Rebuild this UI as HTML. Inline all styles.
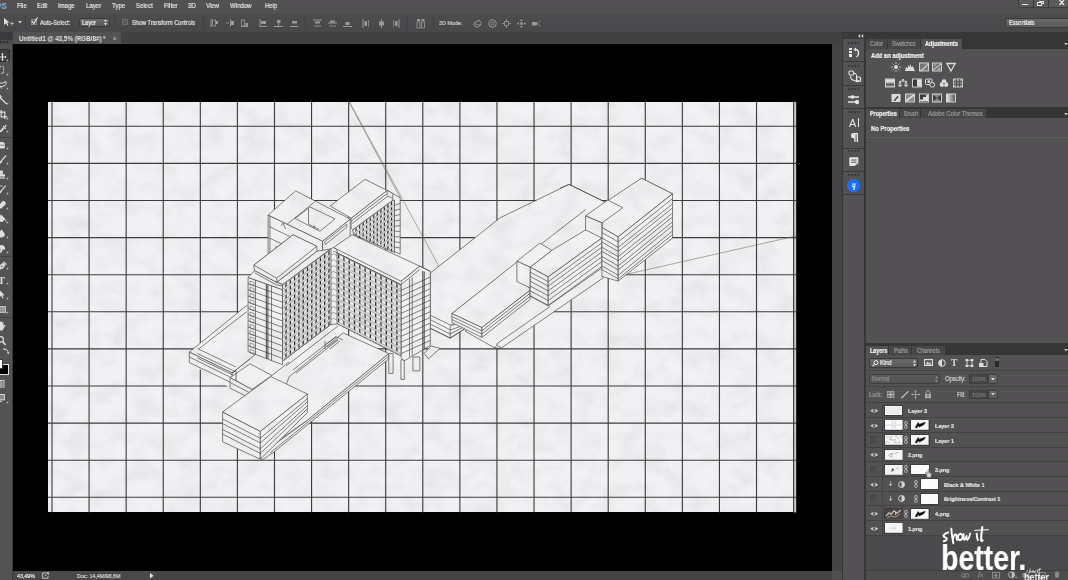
<!DOCTYPE html>
<html><head><meta charset="utf-8">
<style>
*{margin:0;padding:0;box-sizing:border-box}
html,body{width:1068px;height:580px;overflow:hidden;background:#535154;font-family:"Liberation Sans",sans-serif;color:#e0e0e0}
.abs{position:absolute}
#root{position:relative;width:1068px;height:580px;overflow:hidden;background:#535154;filter:blur(.45px)}
.t{position:absolute;white-space:nowrap;font-size:7px;line-height:8px;height:8px;color:#e4e4e4;transform:scaleX(.86);transform-origin:0 50%;will-change:transform;-webkit-text-stroke:.2px currentColor}
.b{font-weight:bold;color:#f2f2f2}
.dim{color:#8f8f8f}
svg{position:absolute;overflow:visible}
#menubar{left:0;top:0;width:1068px;height:12px;background:#525052}
#optbar{left:0;top:12px;width:1068px;height:20px;background:linear-gradient(#4d4c4e,#484749);border-top:1px solid #565556}
#tabbar{left:0;top:32px;width:843px;height:12px;background:#424142}
#doctab{left:13px;top:32px;width:108px;height:12px;background:#535154}
#canvas{left:12.4px;top:44px;width:819.6px;height:527px;background:#000}
#doc{left:48px;top:102px;width:748.2px;height:410.4px;background:#f1f1f3}
#status{left:13px;top:571px;width:819px;height:9px;background:#4a494a}
#toolbar{left:0;top:32px;width:12.6px;height:548px;background:#545354}
#vscroll{left:831.8px;top:44px;width:10.2px;height:536px;background:#444345}
#rightbg{left:841.8px;top:32px;width:226px;height:548px;background:#383738}
#iconcol{left:842.9px;top:39px;width:21.3px;height:541px;background:#535154}
.panel{background:#535154}
.tabrow{background:#373637}
.tab{position:absolute;top:0;height:100%;background:#484748;border-right:1px solid #373637}
.tab.on{background:#535154}
.tab .t{top:1px}
</style></head><body><div id="root">
<div id="menubar" class="abs"></div>
<div id="optbar" class="abs"></div>
<div id="tabbar" class="abs"></div>
<div id="doctab" class="abs"></div>
<div id="canvas" class="abs"></div>
<div id="doc" class="abs"></div>
<div id="status" class="abs"></div>
<div id="toolbar" class="abs"></div>
<div id="vscroll" class="abs"></div>
<div id="rightbg" class="abs"></div>
<div id="iconcol" class="abs"></div>
<!-- menu -->
<div class="t b" style="left:-4.5px;top:0.5px;font-size:9.5px;line-height:10px;height:10px;color:#7fa6c9">PS</div>
<div class="t" style="left:17px;top:1.5px">File</div>
<div class="t" style="left:36.5px;top:1.5px">Edit</div>
<div class="t" style="left:57.5px;top:1.5px">Image</div>
<div class="t" style="left:85.5px;top:1.5px">Layer</div>
<div class="t" style="left:111.5px;top:1.5px">Type</div>
<div class="t" style="left:135.5px;top:1.5px">Select</div>
<div class="t" style="left:163.5px;top:1.5px">Filter</div>
<div class="t" style="left:188px;top:1.5px">3D</div>
<div class="t" style="left:206px;top:1.5px">View</div>
<div class="t" style="left:230px;top:1.5px">Window</div>
<div class="t" style="left:264.5px;top:1.5px">Help</div>
<!-- window controls -->
<div class="abs" style="left:1018px;top:-3px;width:53px;height:11px;background:#5b5a5c;border:1px solid #3e3d3f;border-radius:3px"></div>
<div class="abs" style="left:1033px;top:0;width:1px;height:8px;background:#3a393a"></div>
<div class="abs" style="left:1048px;top:0;width:1px;height:8px;background:#3a393a"></div>
<div class="abs" style="left:1022px;top:3.5px;width:6px;height:1.5px;background:#e8e8e8"></div>
<div class="abs" style="left:1039px;top:0.5px;width:4.5px;height:3.5px;border:1px solid #e0e0e0"></div>
<div class="abs" style="left:1037px;top:2px;width:4.5px;height:3.5px;border:1px solid #e0e0e0;background:#5b5a5c"></div>
<svg style="left:1059px;top:0" width="6" height="6"><path d="M0.5 0L5 5M5 0L0.5 5" stroke="#eee" stroke-width="1.2"/></svg>
<!-- options bar -->
<svg style="left:3px;top:18px" width="16" height="9"><path d="M1 0L1 7L3 5.2L4.5 8L5.5 7.5L4.2 4.8L6.5 4.5Z" fill="#ddd"/><path d="M9 3.5v4M7 5.5h4" stroke="#bbb" stroke-width=".8"/></svg>
<svg style="left:18px;top:21px" width="5" height="3"><path d="M0 0H4L2 2.5Z" fill="#ccc"/></svg>
<div class="abs" style="left:25px;top:15px;width:1px;height:14px;background:#424142"></div>
<div class="abs" style="left:30.5px;top:19px;width:6px;height:6px;border:1px solid #8a898a;background:#5a595a"></div>
<svg style="left:31px;top:17px" width="8" height="8"><path d="M1 4L2.8 6.5L6.5 .5" stroke="#eee" stroke-width="1.1" fill="none"/></svg>
<div class="t" style="left:40px;top:18.8px;font-size:6.5px">Auto-Select:</div>
<div class="abs" style="left:78.5px;top:18px;width:31px;height:9px;background:linear-gradient(#6a696a,#5a595a);border:1px solid #3c3b3c;border-radius:2px"></div>
<div class="t" style="left:81.5px;top:18.8px;font-size:6.5px;color:#eee">Layer</div>
<svg style="left:104px;top:19px" width="4" height="7"><path d="M0 2.5L1.5 0L3 2.5ZM0 4L1.5 6.5L3 4Z" fill="#ddd"/></svg>
<div class="abs" style="left:114px;top:15px;width:1px;height:14px;background:#424142"></div>
<div class="abs" style="left:121.5px;top:19px;width:6px;height:6px;border:1px solid #6e6d6e;background:#5a595a"></div>
<div class="t" style="left:131.5px;top:18.8px;font-size:6.5px">Show Transform Controls</div>
<div class="abs" style="left:203px;top:15px;width:1px;height:14px;background:#424142"></div>
<div class="abs" style="left:305px;top:15px;width:1px;height:14px;background:#424142"></div>
<div class="abs" style="left:407px;top:15px;width:1px;height:14px;background:#424142"></div>
<div class="abs" style="left:433px;top:15px;width:1px;height:14px;background:#424142"></div>
<div class="t dim" style="left:438.5px;top:19px;font-size:6.2px;color:#cfcfcf">3D Mode:</div>
<!-- essentials -->
<div class="abs" style="left:1005px;top:18px;width:66px;height:9.5px;background:linear-gradient(#6a696a,#5b5a5b);border:1px solid #3c3b3c;border-radius:2px"></div>
<div class="t" style="left:1009px;top:19px;font-size:6.5px;color:#eee">Essentials</div>
<!-- doc tab -->
<div class="t b" style="left:18.5px;top:34.8px;font-size:6.5px;color:#e8e8e8;transform:scaleX(.96);-webkit-text-stroke:0">Untitled1 @ 43,5% (RGB/8#) *</div>
<div class="t" style="left:113px;top:34.8px;font-size:6.5px;color:#bbb">×</div>
<!-- optbar icons -->
<svg style="left:210.1px;top:18.5px" width="9" height="9"><path d="M1 0v8" stroke="#9a999a" stroke-width="1"/><rect x="2.5" y="1" width="3" height="6" fill="none" stroke="#9a999a" stroke-width=".8"/><rect x="6" y="2" width="2" height="3" fill="#9a999a"/></svg>
<svg style="left:225.5px;top:18.5px" width="9" height="9"><path d="M4.5 0v8M0 4h3" stroke="#9a999a" stroke-width=".9"/><rect x="5" y="2" width="3" height="4" fill="#9a999a"/></svg>
<svg style="left:240.1px;top:18.5px" width="9" height="9"><path d="M1 7.5h7" stroke="#9a999a" stroke-width="1"/><rect x="1.5" y="1" width="3" height="6" fill="none" stroke="#9a999a" stroke-width=".8"/><rect x="5.5" y="4" width="2.5" height="3" fill="#9a999a"/></svg>
<svg style="left:258.8px;top:18.5px" width="9" height="9"><path d="M1 0v8M1 7.5h7" stroke="#9a999a" stroke-width="1"/><rect x="2" y="2" width="5" height="3" fill="#9a999a"/></svg>
<svg style="left:273.8px;top:18.5px" width="9" height="9"><path d="M0 7.5h9" stroke="#9a999a" stroke-width="1"/><rect x="3" y="1" width="3.5" height="3" fill="#9a999a"/><path d="M4.7 4v3" stroke="#9a999a" stroke-width=".9"/></svg>
<svg style="left:288.5px;top:18.5px" width="9" height="9"><path d="M1 7.5h8" stroke="#9a999a" stroke-width="1"/><rect x="3" y="2" width="5" height="2.5" fill="#9a999a"/></svg>
<svg style="left:312.5px;top:18.5px" width="9" height="9"><path d="M0 1h9" stroke="#9a999a" stroke-width="1"/><rect x="2" y="2.5" width="5" height="2" fill="#9a999a"/><path d="M1 7h7" stroke="#9a999a" stroke-width=".8"/></svg>
<svg style="left:327.9px;top:18.5px" width="9" height="9"><path d="M0 4h9" stroke="#9a999a" stroke-width="1"/><rect x="2" y="1.5" width="5" height="2" fill="#9a999a"/><path d="M1 7h7" stroke="#9a999a" stroke-width=".8"/></svg>
<svg style="left:343.0px;top:18.5px" width="9" height="9"><path d="M0 7.5h9" stroke="#9a999a" stroke-width="1"/><rect x="2.5" y="3" width="4" height="3" fill="#9a999a"/></svg>
<svg style="left:361.3px;top:18.5px" width="9" height="9"><path d="M2 0v9" stroke="#9a999a" stroke-width="1"/><rect x="3.5" y="2" width="2.5" height="5" fill="#9a999a"/><path d="M7.5 1v7" stroke="#9a999a" stroke-width=".7"/></svg>
<svg style="left:376.5px;top:18.5px" width="9" height="9"><path d="M4.5 0v9" stroke="#9a999a" stroke-width="1"/><rect x="2" y="2.5" width="5" height="4" fill="#9a999a"/></svg>
<svg style="left:391.8px;top:18.5px" width="9" height="9"><path d="M7 0v9" stroke="#9a999a" stroke-width="1"/><rect x="3" y="2" width="2.5" height="5" fill="#9a999a"/><path d="M1.5 1v7" stroke="#9a999a" stroke-width=".7"/></svg>
<svg style="left:415.5px;top:18.5px" width="9" height="9"><rect x="1" y="0" width="3" height="2" fill="#9a999a"/><rect x="5.5" y="0" width="3" height="2" fill="#9a999a"/><rect x="1" y="3" width="3" height="6" fill="none" stroke="#9a999a" stroke-width=".8"/><rect x="5.5" y="3" width="3" height="6" fill="none" stroke="#9a999a" stroke-width=".8"/></svg>
<svg style="left:472.5px;top:18.5px" width="9" height="9"><path d="M1 5.5q0-3 3-3l2-1.5 2.5 3.5-3 3.5H2.5z" fill="none" stroke="#9a999a" stroke-width="1"/><path d="M2 5l5 1" stroke="#9a999a" stroke-width=".8"/></svg>
<svg style="left:487.5px;top:18.5px" width="9" height="9"><circle cx="4.5" cy="4.5" r="3.8" fill="none" stroke="#9a999a" stroke-width="1"/><circle cx="4.5" cy="4.5" r="1.5" fill="none" stroke="#9a999a" stroke-width="1"/></svg>
<svg style="left:502.1px;top:18.5px" width="9" height="9"><path d="M4.5 0v9M0 4.5h9" stroke="#9a999a" stroke-width=".8"/><rect x="2.5" y="2.5" width="4" height="4" fill="#4a494a" stroke="#9a999a" stroke-width=".8"/></svg>
<svg style="left:516.5px;top:18.5px" width="9" height="9"><path d="M4.5 0L6 2H3zM4.5 9L6 7H3zM0 4.5L2 3v3zM9 4.5L7 3v3z" fill="#9a999a"/><rect x="3.2" y="3.2" width="2.6" height="2.6" fill="#9a999a"/></svg>
<svg style="left:531.5px;top:18.5px" width="9" height="9"><rect x="0" y="3" width="5" height="3.5" fill="#9a999a"/><path d="M5.5 4.5l3-2.5M5.5 4.8l3 2.5" stroke="#9a999a" stroke-width=".8"/></svg>
<div class="abs" style="left:0;top:32px;width:12.6px;height:7.6px;background:#3a393b"></div><div class="abs" style="left:0;top:39.6px;width:12.6px;height:5px;background:#4b4a4c"></div>
<svg style="left:-1.2px;top:41px" width="10" height="2"><path d="M1 1h1.5M4 1h1.5M7 1h1.5" stroke="#1e1e1e" stroke-width="1.3"/></svg>
<div class="abs" style="left:12.4px;top:44px;width:.8px;height:536px;background:#3a393a"></div>
<div class="abs" style="left:-2px;top:48.8px;width:11.6px;height:12.8px;background:#3e3d3e;border:1px solid #2e2d2e;border-radius:2px"></div>
<svg style="left:-1.2px;top:52.5px" width="8" height="8"><path d="M3.5 .5v7M0 4h7" stroke="#dedede" stroke-width="1.1"/><path d="M3.5 0l1.3 1.6H2.2zM7.6 4L6 5.3V2.7zM3.5 8L2.2 6.4h2.6z" fill="#dedede"/></svg>
<svg style="left:5.8px;top:58.900000000000006px" width="3" height="3"><path d="M2.2 0v2.2H0z" fill="#c4c4c4"/></svg>
<svg style="left:-1.2px;top:65.5px" width="7" height="8"><path d="M-2 .7H4.6V7.3H-2" fill="none" stroke="#dedede" stroke-width="1" stroke-dasharray="1.6 1.2"/></svg>
<svg style="left:5.8px;top:72.7px" width="3" height="3"><path d="M2.2 0v2.2H0z" fill="#c4c4c4"/></svg>
<svg style="left:-.5px;top:79.5px" width="8" height="9"><path d="M-1 6Q2 7.5 5 5.5Q7 3.5 6 1.5M-1 3Q3 4 6 1.5M1 6.2Q.5 7.5 1.5 8.5" fill="none" stroke="#dedede" stroke-width="1"/></svg>
<svg style="left:5.8px;top:87.2px" width="3" height="3"><path d="M2.2 0v2.2H0z" fill="#c4c4c4"/></svg>
<svg style="left:-1.2px;top:95px" width="9" height="10"><path d="M1.5 3L7.5 9" stroke="#dedede" stroke-width="1.3"/><path d="M1.5 0v2M0 3.2h-1M3 1.2L2.4 2M-.2 .8L.8 2" stroke="#dedede" stroke-width=".9"/><circle cx="1.3" cy="3" r="1.1" fill="#dedede"/></svg>
<svg style="left:5.8px;top:102.0px" width="3" height="3"><path d="M2.2 0v2.2H0z" fill="#c4c4c4"/></svg>
<svg style="left:-1.2px;top:110px" width="8" height="9"><path d="M2.2 0V6.8H8M-1 2.2H5.8V9" fill="none" stroke="#dedede" stroke-width="1.2"/></svg>
<svg style="left:5.8px;top:116.7px" width="3" height="3"><path d="M2.2 0v2.2H0z" fill="#c4c4c4"/></svg>
<svg style="left:-1.2px;top:123.5px" width="8" height="9"><path d="M.2 8.6L.8 6.6 4.2 3.2 5.6 4.6 2.2 8z" fill="#dedede"/><path d="M4 2l2.8 2.8" stroke="#dedede" stroke-width="1.2"/><path d="M5.6 2.6Q6 .6 7.4 .4Q8 1.6 6.6 3.4z" fill="#dedede"/></svg>
<svg style="left:5.8px;top:130.2px" width="3" height="3"><path d="M2.2 0v2.2H0z" fill="#c4c4c4"/></svg>
<div class="abs" style="left:0;top:137px;width:12px;height:1px;background:#424142"></div>
<svg style="left:-1.2px;top:141px" width="8" height="8"><path d="M-2 3Q-2 1 1 1H3Q6 1 6 3.5V6Q6 7.5 4 7.5H-2z" fill="#dedede"/><path d="M-2 4.2H6" stroke="#666" stroke-width=".8"/></svg>
<svg style="left:5.8px;top:147.2px" width="3" height="3"><path d="M2.2 0v2.2H0z" fill="#c4c4c4"/></svg>
<svg style="left:-1.2px;top:155px" width="8" height="10"><path d="M7 .3L2 6.4" stroke="#dedede" stroke-width="1.3"/><path d="M2.4 5.8Q.4 6.2-.6 9.2Q2.2 8.8 3.2 6.8z" fill="#dedede"/></svg>
<svg style="left:5.8px;top:161.89999999999998px" width="3" height="3"><path d="M2.2 0v2.2H0z" fill="#c4c4c4"/></svg>
<svg style="left:-1.2px;top:169.5px" width="8" height="10"><path d="M1.2 .5H3.6Q4.4 2 3.4 4.2H6V6.4H-1.2V4.2H1.4Q.4 2 1.2 .5z" fill="#dedede"/><path d="M-1.2 8h7.2" stroke="#dedede" stroke-width="1.2"/></svg>
<svg style="left:5.8px;top:176.5px" width="3" height="3"><path d="M2.2 0v2.2H0z" fill="#c4c4c4"/></svg>
<svg style="left:-1.2px;top:185px" width="8" height="10"><path d="M6.8 .6L2 6.2" stroke="#dedede" stroke-width="1.2"/><path d="M2.4 5.6Q.6 6.2-.4 8.8Q2 8.4 3 6.6z" fill="#dedede"/><path d="M-1 2.2Q1 .2 3.6 1" fill="none" stroke="#dedede" stroke-width=".9"/></svg>
<svg style="left:5.8px;top:192.0px" width="3" height="3"><path d="M2.2 0v2.2H0z" fill="#c4c4c4"/></svg>
<svg style="left:-1.2px;top:200px" width="8" height="9"><path d="M-1 6L3.6 1.2Q4.6 .4 5.8 1.4L6.6 2.4Q7.2 3.4 6.4 4.4L2.4 8.4H-1z" fill="#dedede"/></svg>
<svg style="left:5.8px;top:206.7px" width="3" height="3"><path d="M2.2 0v2.2H0z" fill="#c4c4c4"/></svg>
<svg style="left:-1.2px;top:214px" width="8" height="9"><path d="M-1 3L2 .6 6.4 5 3 8.2-1 7z" fill="#dedede"/><path d="M6.4 5Q7.8 6.4 7 8Q5.8 7 6.4 5z" fill="#dedede"/></svg>
<svg style="left:5.8px;top:220.79999999999998px" width="3" height="3"><path d="M2.2 0v2.2H0z" fill="#c4c4c4"/></svg>
<svg style="left:-1.2px;top:228.5px" width="8" height="9"><path d="M2.4 .4Q6.6 4.4 5.6 6.8Q4.4 8.8 1.8 8.6Q-1.6 8-1 5.6Q-.2 3.4 2.4 .4z" fill="#dedede"/></svg>
<svg style="left:5.8px;top:235.5px" width="3" height="3"><path d="M2.2 0v2.2H0z" fill="#c4c4c4"/></svg>
<svg style="left:-1.2px;top:243.5px" width="8" height="9"><path d="M-1 3.6Q1-.2 4.4 1.4Q7 3.2 5.4 6L3.8 5.2 2.6 8.6H.8L1.6 4.8-1 5z" fill="#dedede"/></svg>
<svg style="left:5.8px;top:250.5px" width="3" height="3"><path d="M2.2 0v2.2H0z" fill="#c4c4c4"/></svg>
<div class="abs" style="left:0;top:255.5px;width:12px;height:1px;background:#424142"></div>
<svg style="left:-1.2px;top:260.5px" width="8" height="10"><path d="M-.6 9L.8 4.2 4.2 1.6 6.6 4 4 7.4z" fill="#dedede"/><path d="M4.6 .6L7.6 3.6" stroke="#dedede" stroke-width="1.2"/><circle cx="2.8" cy="5.4" r=".8" fill="#545354"/></svg>
<svg style="left:5.8px;top:267.4px" width="3" height="3"><path d="M2.2 0v2.2H0z" fill="#c4c4c4"/></svg>
<div class="t b" style="left:-2.5px;top:274.5px;font-size:10.5px;line-height:11px;height:11px;font-family:'Liberation Serif',serif;color:#dedede;transform:none;-webkit-text-stroke:0">T</div>
<svg style="left:5.8px;top:282.0px" width="3" height="3"><path d="M2.2 0v2.2H0z" fill="#c4c4c4"/></svg>
<svg style="left:-1.2px;top:290px" width="6" height="9"><path d="M.4 0V7.4L2.2 5.8 3.4 8.6 4.6 8 3.4 5.4 5.6 5.2z" fill="#dedede"/></svg>
<svg style="left:5.8px;top:296.7px" width="3" height="3"><path d="M2.2 0v2.2H0z" fill="#c4c4c4"/></svg>
<div class="abs" style="left:-2px;top:305.5px;width:7.5px;height:7px;background:#9a999a;border:1px solid #bdbdbd"></div>
<svg style="left:5.8px;top:311.2px" width="3" height="3"><path d="M2.2 0v2.2H0z" fill="#c4c4c4"/></svg>
<div class="abs" style="left:0;top:317px;width:12px;height:1px;background:#424142"></div>
<svg style="left:-1.2px;top:321px" width="8" height="10"><path d="M-1 4.4V2Q-.4 1.2 .2 2V1Q.9 .2 1.6 1V.8Q2.3 0 3 .8V1.4Q3.7 .8 4.4 1.6V5L5.6 3.8Q6.6 3.6 6.4 4.6L4 8.4V9.6H-1z" fill="#dedede"/></svg>
<svg style="left:-1.2px;top:335.5px" width="8" height="10"><circle cx="1.6" cy="3.4" r="2.8" fill="none" stroke="#dedede" stroke-width="1.2"/><path d="M3.6 5.6L6.6 9" stroke="#dedede" stroke-width="1.6"/></svg>
<svg style="left:2.5px;top:348px" width="7" height="7"><path d="M1.4 1.2Q5 1 5.2 5" fill="none" stroke="#dedede" stroke-width=".9"/><path d="M1.8 0L0 1.3l1.8 1.3zM4 4.6L5.2 6.6 6.4 4.6z" fill="#dedede"/></svg>
<div class="abs" style="left:-1px;top:363.5px;width:10.3px;height:11px;background:#000;border:1px solid #e4e4e4"></div>
<div class="abs" style="left:-2px;top:359px;width:5.2px;height:9.5px;background:#fff;border:1px solid #3a393a"></div>
<svg style="left:-1.2px;top:380px" width="6" height="8"><rect x="-3" y=".5" width="8" height="6.6" fill="none" stroke="#dedede" stroke-width=".9"/><path d="M-1 1.8h3v4h-3zM3 1.5v4.5" stroke="#dedede" stroke-width=".8" fill="none"/></svg>
<svg style="left:-1.2px;top:394px" width="7" height="9"><rect x="-3" y=".5" width="8.4" height="5.4" fill="#8a898a" stroke="#dedede" stroke-width=".9"/><path d="M-2 7.4h5" stroke="#dedede" stroke-width="1"/></svg>
<svg style="left:5.8px;top:400.5px" width="3" height="3"><path d="M2.2 0v2.2H0z" fill="#c4c4c4"/></svg>
<div class="t" style="left:17px;top:571.6px;font-size:6.2px;color:#e8e8e8">43,49%</div>
<svg style="left:41.5px;top:572.2px" width="8" height="7"><path d="M4 1H.6V6.2H6V4" fill="none" stroke="#ccc" stroke-width=".9"/><path d="M3 4L6.4 .8M4.4 .6H6.6V2.8" fill="none" stroke="#ccc" stroke-width=".9"/></svg>
<div class="t" style="left:77px;top:571.6px;font-size:6.2px;color:#d6d6d6">Doc: 14,4M/98,6M</div>
<svg style="left:149.5px;top:572.5px" width="4" height="6"><path d="M0 0L3.6 2.8 0 5.6z" fill="#e0e0e0"/></svg>
<div class="abs" style="left:156px;top:571px;width:676px;height:9px;background:#454445"></div>
<div class="abs" style="left:832px;top:571px;width:10px;height:9px;background:#504f50"></div>
<svg style="left:0;top:0" width="1068" height="580" viewBox="0 0 1068 580">
<rect x="794" y="102" width="2.2" height="410.4" fill="#c9c9cb"/>
<path d="M52.00 102V512.4M89.08 102V512.4M126.16 102V512.4M163.24 102V512.4M200.32 102V512.4M237.40 102V512.4M274.48 102V512.4M311.56 102V512.4M348.64 102V512.4M385.72 102V512.4M422.80 102V512.4M459.88 102V512.4M496.96 102V512.4M534.04 102V512.4M571.12 102V512.4M608.20 102V512.4M645.28 102V512.4M682.36 102V512.4M719.44 102V512.4M756.52 102V512.4M793.60 102V512.4M48 126.30H796.2M48 163.40H796.2M48 200.50H796.2M48 237.60H796.2M48 274.70H796.2M48 311.80H796.2M48 348.90H796.2M48 386.00H796.2M48 423.10H796.2M48 460.20H796.2M48 497.30H796.2" stroke="#3e3e40" stroke-width="1.12" fill="none"/>
<path d="M349.0 102.0L400.2 197.7M349.6 102.0L439.5 267.3M627.5 274.1L796.0 236.0" fill="none" stroke="#6c6c6c" stroke-width="0.55" />
<path d="M465.0 331.2L495.2 348.1L501.2 348.1L603.0 278.0L601.0 240.0L520.0 290.0Z" fill="#f1f1f3" stroke="#4a4a4a" stroke-width="0.68" stroke-linejoin="round" />
<path d="M430.3 273.1L500.3 217.7L569.0 184.4L606.0 202.5L602.0 228.0L548.0 277.0L530.0 290.0L481.0 328.0L469.1 326.0L450.2 338.1L430.3 328.3Z" fill="#f1f1f3" stroke="#4a4a4a" stroke-width="0.68" stroke-linejoin="round" />
<path d="M430.3 315.3L451.0 325.3L464.8 322.8L467.4 324.8M430.3 319.7L450.5 330.0L466.6 324.0M430.3 324.0L450.2 334.0L467.4 324.8M430.3 328.3L450.2 338.1L469.1 326.0M450.2 325.7L450.2 338.1M451.0 325.3L458.0 320.0" fill="none" stroke="#4a4a4a" stroke-width="0.68" />
<path d="M451.9 313.6L585.6 209.5" fill="none" stroke="#4a4a4a" stroke-width="0.68" />
<path d="M451.9 313.6L516.9 262.0L530.1 290.2L481.9 327.6Z" fill="#f1f1f3" stroke="#4a4a4a" stroke-width="0.68" stroke-linejoin="round" />
<path d="M451.9 313.6L481.9 327.6L481.9 337.4L451.9 322.5Z" fill="#f1f1f3" stroke="#4a4a4a" stroke-width="0.68" stroke-linejoin="round" />
<path d="M481.9 327.6L530.1 290.2L530.1 299.5L481.9 337.4Z" fill="#f1f1f3" stroke="#4a4a4a" stroke-width="0.68" stroke-linejoin="round" />
<path d="M451.9 316.6L481.9 330.8L530.1 293.3M451.9 319.6L481.9 334.0L530.1 296.4" fill="none" stroke="#4a4a4a" stroke-width="0.68" />
<path d="M496.5 344.0L550.0 306.5M495.2 348.1L497.0 344.5L501.2 348.1" fill="none" stroke="#4a4a4a" stroke-width="0.68" />
<path d="M530.1 267.2L548.2 276.9L601.9 238.0L601.9 222.9L585.6 229.9L551.9 250.3Z" fill="#f1f1f3" stroke="#4a4a4a" stroke-width="0.68" stroke-linejoin="round" />
<path d="M530.1 267.2L548.2 276.9L548.2 305.8L530.1 296.0Z" fill="#f1f1f3" stroke="#4a4a4a" stroke-width="0.68" stroke-linejoin="round" />
<path d="M548.2 276.9L601.9 238.0L601.9 268.0L548.2 305.8Z" fill="#f1f1f3" stroke="#4a4a4a" stroke-width="0.68" stroke-linejoin="round" />
<path d="M530.1 272.0L548.2 281.7L601.9 242.8M530.1 276.4L548.2 286.1L601.9 247.2M530.1 281.2L548.2 290.9L601.9 252.0M530.1 286.0L548.2 295.7L601.9 256.8M530.1 290.8L548.2 300.5L601.9 261.6M530.1 295.7L548.2 305.4L601.9 266.5" fill="none" stroke="#4a4a4a" stroke-width="0.68" />
<path d="M516.9 261.2L539.8 243.1L551.9 250.3L530.1 267.2Z" fill="#f1f1f3" stroke="#4a4a4a" stroke-width="0.68" stroke-linejoin="round" />
<path d="M516.9 261.2L530.1 267.2L530.1 287.7L516.9 281.7Z" fill="#f1f1f3" stroke="#4a4a4a" stroke-width="0.68" stroke-linejoin="round" />
<path d="M601.9 222.9L641.5 178.2L672.5 193.8L618.2 236.9Z" fill="#f1f1f3" stroke="#4a4a4a" stroke-width="0.68" stroke-linejoin="round" />
<path d="M604.0 203.0L641.5 178.2L672.5 193.8L618.2 236.9L601.9 227.5Z" fill="#f1f1f3" stroke="#4a4a4a" stroke-width="0.68" stroke-linejoin="round" />
<path d="M601.9 227.5L618.2 236.9L618.2 281.1L601.9 276.4Z" fill="#f1f1f3" stroke="#4a4a4a" stroke-width="0.68" stroke-linejoin="round" />
<path d="M618.2 236.9L672.5 193.8L672.5 238.0L618.2 281.1Z" fill="#f1f1f3" stroke="#4a4a4a" stroke-width="0.68" stroke-linejoin="round" />
<path d="M601.9 232.5L618.2 241.9L672.5 198.7M601.9 238.0L618.2 247.4L672.5 204.0M601.9 242.0L618.2 251.4L672.5 207.9M601.9 247.3L618.2 256.7L672.5 213.0M601.9 251.3L618.2 260.7L672.5 216.9M601.9 256.5L618.2 265.9L672.5 221.9M601.9 260.5L618.2 269.9L672.5 225.8M601.9 265.9L618.2 275.3L672.5 231.0M601.9 269.5L618.2 278.9L672.5 234.5" fill="none" stroke="#4a4a4a" stroke-width="0.68" />
<path d="M585.6 215.9L607.7 200.1L622.9 207.7L601.9 222.9Z" fill="#f1f1f3" stroke="#4a4a4a" stroke-width="0.68" stroke-linejoin="round" />
<path d="M585.6 215.9L601.9 222.9L601.9 238.0L585.6 229.9Z" fill="#f1f1f3" stroke="#4a4a4a" stroke-width="0.68" stroke-linejoin="round" />
<path d="M569.0 184.4L604.2 201.5M560.0 188.0L569.0 184.4" fill="none" stroke="#4a4a4a" stroke-width="0.68" />
<path d="M189.3 352.1L246.7 305.5L248.1 300.0L331.0 324.0L343.1 332.9L388.8 353.6L388.8 358.8L262.0 460.0L222.6 441.8L222.6 412.0L230.1 388.0L189.3 362.6Z" fill="#f1f1f3" stroke="none" stroke-width="0.68" stroke-linejoin="round" />
<path d="M232.0 373.0L250.0 359.0M252.0 389.5L262.0 382.0M272.0 375.4L289.0 362.0" fill="none" stroke="#4a4a4a" stroke-width="0.68" />
<path d="M189.3 352.1L246.7 305.5L290.0 327.0L232.0 373.0Z" fill="#f1f1f3" stroke="#4a4a4a" stroke-width="0.68" stroke-linejoin="round" />
<path d="M189.3 352.1L232.0 373.0L232.0 383.0L189.3 362.6Z" fill="#f1f1f3" stroke="#4a4a4a" stroke-width="0.68" stroke-linejoin="round" />
<path d="M198.6 349.0L246.7 311.7M197.5 348.6L236.0 367.0M197.5 353.5L235.0 371.5M197.5 358.0L233.0 375.0M189.3 357.0L232.0 378.0" fill="none" stroke="#4a4a4a" stroke-width="0.68" />
<path d="M289.0 377.0L343.1 332.9L388.8 353.6L307.8 420.0L262.0 452.0Z" fill="#f1f1f3" stroke="#4a4a4a" stroke-width="0.68" stroke-linejoin="round" />
<path d="M388.8 353.6L388.8 358.8L274.0 452.0L262.0 460.0L260.3 455.0L307.8 420.0Z" fill="#f1f1f3" stroke="#4a4a4a" stroke-width="0.68" stroke-linejoin="round" />
<path d="M388.8 356.2L270.0 453.0M283.3 360.6L331.0 324.3M286.0 366.0L338.0 326.0M293.0 370.0L336.0 336.5L343.0 340.0M296.0 373.0L338.0 340.0M325.0 341.0L325.0 349.0M325.0 345.0L336.0 337.0M327.0 347.0L338.0 339.0M330.0 349.0L340.0 341.0" fill="none" stroke="#4a4a4a" stroke-width="0.68" />
<path d="M388.8 353.6L393.1 353.6L393.1 373.4L388.8 373.4Z" fill="#f1f1f3" stroke="#4a4a4a" stroke-width="0.68" stroke-linejoin="round" />
<path d="M400.9 359.7L404.3 359.7L404.3 379.5L400.9 379.5Z" fill="#f1f1f3" stroke="#4a4a4a" stroke-width="0.68" stroke-linejoin="round" />
<path d="M412.9 357.0L419.8 357.0L419.8 370.9L412.9 370.9Z" fill="#f1f1f3" stroke="#4a4a4a" stroke-width="0.68" stroke-linejoin="round" />
<path d="M424.1 353.6L431.0 345.9L440.0 348.4L428.5 358.8Z" fill="#f1f1f3" stroke="#4a4a4a" stroke-width="0.68" stroke-linejoin="round" />
<path d="M230.1 377.7L249.9 363.8L272.0 375.4L252.0 389.5Z" fill="#f1f1f3" stroke="#4a4a4a" stroke-width="0.68" stroke-linejoin="round" />
<path d="M230.1 377.7L252.0 389.5L252.0 399.0L230.1 388.2Z" fill="#f1f1f3" stroke="#4a4a4a" stroke-width="0.68" stroke-linejoin="round" />
<path d="M230.1 382.5L252.0 394.0" fill="none" stroke="#4a4a4a" stroke-width="0.68" />
<path d="M232.0 373.0L236.0 370.5L236.0 381.0" fill="none" stroke="#444" stroke-width="0.8" />
<path d="M222.6 412.0L260.3 431.3L260.3 459.2L222.6 441.8Z" fill="#f1f1f3" stroke="#4a4a4a" stroke-width="0.68" stroke-linejoin="round" />
<path d="M260.3 431.3L307.4 394.0L307.4 412.7L260.3 459.2Z" fill="#f1f1f3" stroke="#4a4a4a" stroke-width="0.68" stroke-linejoin="round" />
<path d="M222.6 419.0L260.3 438.3L307.4 398.7M222.6 423.6L260.3 442.9L307.4 401.8M222.6 429.5L260.3 448.8L307.4 405.7M222.6 434.1L260.3 453.4L307.4 408.8" fill="none" stroke="#4a4a4a" stroke-width="0.68" />
<path d="M222.6 412.0L270.8 376.6L307.4 394.0L260.3 431.3Z" fill="#f1f1f3" stroke="#4a4a4a" stroke-width="0.68" stroke-linejoin="round" />
<path d="M268.1 215.0L322.6 241.2L322.6 292.0L268.1 266.0Z" fill="#f1f1f3" stroke="#4a4a4a" stroke-width="0.68" stroke-linejoin="round" />
<path d="M269.9 216.0L269.9 266.0M269.5 226.7L290.0 236.5M269.5 238.0L282.0 244.0M276.0 246.0L276.0 256.0M281.0 226.0L283.0 223.0L285.5 229.0" fill="none" stroke="#4a4a4a" stroke-width="0.68" />
<path d="M322.6 241.2L350.2 219.1L350.2 252.0L322.6 266.0Z" fill="#f1f1f3" stroke="#4a4a4a" stroke-width="0.68" stroke-linejoin="round" />
<path d="M324.6 241.8L346.7 224.2L347.1 226.9L325.3 244.6L324.6 241.8" fill="none" stroke="#4a4a4a" stroke-width="0.68" />
<path d="M268.1 215.0L295.7 190.9L350.2 219.1L322.6 241.2Z" fill="#f1f1f3" stroke="#4a4a4a" stroke-width="0.68" stroke-linejoin="round" />
<path d="M314.6 201.9L287.4 224.0" fill="none" stroke="#4a4a4a" stroke-width="0.68" />
<path d="M295.0 218.4L310.2 207.0L335.0 218.9L319.8 231.3Z" fill="#f1f1f3" stroke="#4a4a4a" stroke-width="0.68" stroke-linejoin="round" />
<path d="M308.5 208.8L308.5 224.0M308.5 224.0L319.0 229.5M314.5 225.5L314.0 228.0" fill="none" stroke="#4a4a4a" stroke-width="0.68" />
<path d="M387.1 190.4L400.2 197.7L400.2 254.2L387.1 248.0Z" fill="#f1f1f3" stroke="#4a4a4a" stroke-width="0.68" stroke-linejoin="round" />
<path d="M394.5 205.4L400.2 203.3M394.5 210.6L400.2 208.9M394.5 215.8L400.2 214.5M394.5 221.0L400.2 220.1M394.5 226.2L400.2 225.7M394.5 231.4L400.2 231.3M394.5 236.6L400.2 236.9M394.5 241.8L400.2 242.5M394.5 247.0L400.2 248.1M394.5 200.2L394.5 251.8" fill="none" stroke="#4a4a4a" stroke-width="0.68" />
<clipPath id="c1"><path d="M352.7 229.7L392.8 200.2L394.5 200.2L394.5 252.5L353.6 234.6Z"/></clipPath>
<path d="M352.7 229.7L392.8 200.2L394.5 200.2L394.5 252.5L353.6 234.6Z" fill="#e9e9eb"/>
<g clip-path="url(#c1)">
<path d="M356.0 195.0L356.0 256.0M359.6 195.0L359.6 256.0M363.1 195.0L363.1 256.0M366.6 195.0L366.6 256.0M370.2 195.0L370.2 256.0M373.8 195.0L373.8 256.0M377.3 195.0L377.3 256.0M380.9 195.0L380.9 256.0M384.4 195.0L384.4 256.0M387.9 195.0L387.9 256.0M391.5 195.0L391.5 256.0" fill="none" stroke="#303030" stroke-width="1.25" />
<path d="M352.0 230.0L395.0 198.4M352.0 235.2L395.0 203.6M352.0 240.4L395.0 208.8M352.0 245.6L395.0 214.0M352.0 250.8L395.0 219.2M352.0 256.0L395.0 224.4M352.0 261.2L395.0 229.6M352.0 266.4L395.0 234.8M352.0 271.6L395.0 240.0M352.0 276.8L395.0 245.2M352.0 282.0L395.0 250.4M352.0 287.2L395.0 255.6" fill="none" stroke="#e6e6e8" stroke-width="1.7" />
<path d="M352.0 229.2L395.0 197.6M352.0 230.8L395.0 199.2M352.0 234.4L395.0 202.8M352.0 236.0L395.0 204.4M352.0 239.6L395.0 208.0M352.0 241.2L395.0 209.6M352.0 244.8L395.0 213.2M352.0 246.4L395.0 214.8M352.0 250.0L395.0 218.4M352.0 251.6L395.0 220.0M352.0 255.2L395.0 223.6M352.0 256.8L395.0 225.2M352.0 260.4L395.0 228.8M352.0 262.0L395.0 230.4M352.0 265.6L395.0 234.0M352.0 267.2L395.0 235.6M352.0 270.8L395.0 239.2M352.0 272.4L395.0 240.8M352.0 276.0L395.0 244.4M352.0 277.6L395.0 246.0M352.0 281.2L395.0 249.6M352.0 282.8L395.0 251.2M352.0 286.4L395.0 254.8M352.0 288.0L395.0 256.4" fill="none" stroke="#808080" stroke-width="0.45" />
</g>
<path d="M352.7 229.7L392.8 200.2L394.5 200.2L394.5 252.5L353.6 234.6Z" fill="none" stroke="#4a4a4a" stroke-width="0.68"/>
<path d="M351.1 218.2L387.1 190.4L392.8 193.5L392.8 200.2L352.7 229.7L351.1 228.0Z" fill="#f1f1f3" stroke="#4a4a4a" stroke-width="0.68" stroke-linejoin="round" />
<path d="M351.1 221.2L387.1 193.6M351.9 223.6L388.0 196.0L392.8 198.5M387.1 190.4L387.1 195.5" fill="none" stroke="#4a4a4a" stroke-width="0.68" />
<path d="M330.2 205.9L365.0 179.4L387.1 190.4L351.1 218.2Z" fill="#f1f1f3" stroke="#4a4a4a" stroke-width="0.68" stroke-linejoin="round" />
<path d="M401.0 281.2L419.7 266.1L430.3 271.4L430.3 345.5L404.0 361.0L401.0 357.0Z" fill="#f1f1f3" stroke="#4a4a4a" stroke-width="0.68" stroke-linejoin="round" />
<path d="M401.0 290.4L430.3 277.1M401.0 296.2L430.3 282.9M401.0 301.9L430.3 288.6M401.0 307.7L430.3 294.4M401.0 313.4L430.3 300.1M401.0 319.2L430.3 305.9M401.0 324.9L430.3 311.6M401.0 330.7L430.3 317.4M401.0 336.4L430.3 323.1M401.0 342.2L430.3 328.9M401.0 347.9L430.3 334.6M401.0 353.7L430.3 340.4M409.5 279.0L409.5 357.0M412.2 277.5L412.2 355.5" fill="none" stroke="#4a4a4a" stroke-width="0.68" />
<path d="M422.8 271.0L422.8 350.0M424.2 271.6L424.2 349.3" fill="none" stroke="#333" stroke-width="0.9" />
<path d="M333.5 247.5L401.0 281.2L401.0 285.2L333.5 251.5Z" fill="#f1f1f3" stroke="none" stroke-width="0.68" stroke-linejoin="round" />
<clipPath id="c2"><path d="M333.5 251.0L401.0 284.7L401.0 356.0L333.5 322.0Z"/></clipPath>
<path d="M333.5 251.0L401.0 284.7L401.0 356.0L333.5 322.0Z" fill="#e9e9eb"/>
<g clip-path="url(#c2)">
<path d="M338.6 245.0L338.6 360.0M343.9 245.0L343.9 360.0M349.2 245.0L349.2 360.0M354.5 245.0L354.5 360.0M359.8 245.0L359.8 360.0M365.1 245.0L365.1 360.0M370.4 245.0L370.4 360.0M375.7 245.0L375.7 360.0M381.0 245.0L381.0 360.0M386.3 245.0L386.3 360.0M391.6 245.0L391.6 360.0M396.9 245.0L396.9 360.0" fill="none" stroke="#303030" stroke-width="1.3" />
<path d="M333.5 251.0L401.0 284.7M333.5 256.8L401.0 290.5M333.5 262.6L401.0 296.3M333.5 268.4L401.0 302.1M333.5 274.2L401.0 307.9M333.5 280.0L401.0 313.7M333.5 285.8L401.0 319.5M333.5 291.6L401.0 325.3M333.5 297.4L401.0 331.1M333.5 303.2L401.0 336.9M333.5 309.0L401.0 342.7M333.5 314.8L401.0 348.5M333.5 320.6L401.0 354.3M333.5 326.4L401.0 360.1" fill="none" stroke="#e8e8ea" stroke-width="1.9" />
<path d="M333.5 250.1L401.0 283.8M333.5 251.9L401.0 285.6M333.5 255.9L401.0 289.6M333.5 257.7L401.0 291.4M333.5 261.7L401.0 295.4M333.5 263.5L401.0 297.2M333.5 267.5L401.0 301.2M333.5 269.3L401.0 303.0M333.5 273.3L401.0 307.0M333.5 275.1L401.0 308.8M333.5 279.1L401.0 312.8M333.5 280.9L401.0 314.6M333.5 284.9L401.0 318.6M333.5 286.7L401.0 320.4M333.5 290.7L401.0 324.4M333.5 292.5L401.0 326.2M333.5 296.5L401.0 330.2M333.5 298.3L401.0 332.0M333.5 302.3L401.0 336.0M333.5 304.1L401.0 337.8M333.5 308.1L401.0 341.8M333.5 309.9L401.0 343.6M333.5 313.9L401.0 347.6M333.5 315.7L401.0 349.4M333.5 319.7L401.0 353.4M333.5 321.5L401.0 355.2M333.5 325.5L401.0 359.2M333.5 327.3L401.0 361.0" fill="none" stroke="#777" stroke-width="0.45" />
</g>
<path d="M333.5 251.0L401.0 284.7L401.0 356.0L333.5 322.0Z" fill="none" stroke="#4a4a4a" stroke-width="0.68"/>
<path d="M330.5 249.0L333.5 247.5L337.0 249.5L337.0 324.0L331.0 324.5L330.5 324.3Z" fill="#f1f1f3" stroke="#4a4a4a" stroke-width="0.68" stroke-linejoin="round" />
<path d="M330.5 255.3L333.5 253.8L337.0 255.8M330.5 261.2L333.5 259.7L337.0 261.7M330.5 267.1L333.5 265.6L337.0 267.6M330.5 272.9L333.5 271.4L337.0 273.4M330.5 278.8L333.5 277.2L337.0 279.2M330.5 284.6L333.5 283.1L337.0 285.1M330.5 290.4L333.5 288.9L337.0 290.9M330.5 296.3L333.5 294.8L337.0 296.8M330.5 302.1L333.5 300.6L337.0 302.6M330.5 308.0L333.5 306.5L337.0 308.5M330.5 313.9L333.5 312.4L337.0 314.4M330.5 319.7L333.5 318.2L337.0 320.2" fill="none" stroke="#4a4a4a" stroke-width="0.45" />
<path d="M333.5 247.5L352.1 234.7L419.7 266.1L401.0 281.2Z" fill="#f1f1f3" stroke="#4a4a4a" stroke-width="0.68" stroke-linejoin="round" />
<path d="M333.5 251.0L401.0 284.7L419.7 269.6M419.7 266.1L430.3 271.4" fill="none" stroke="#4a4a4a" stroke-width="0.68" />
<path d="M248.1 277.4L282.5 289.7L282.5 364.7L248.1 351.6Z" fill="#f1f1f3" stroke="#4a4a4a" stroke-width="0.68" stroke-linejoin="round" />
<path d="M248.1 283.6L282.5 295.9M248.1 289.8L282.5 302.2M248.1 296.0L282.5 308.4M248.1 302.2L282.5 314.7M248.1 308.4L282.5 320.9M248.1 314.6L282.5 327.2M248.1 320.8L282.5 333.4M248.1 327.0L282.5 339.7M248.1 333.2L282.5 345.9M248.1 339.4L282.5 352.2M248.1 345.6L282.5 358.4M255.5 280.0L255.5 354.5M271.5 286.0L271.5 360.5" fill="none" stroke="#4a4a4a" stroke-width="0.68" />
<path d="M266.3 284.0L266.3 358.5M267.9 284.6L267.9 359.0" fill="none" stroke="#333" stroke-width="0.9" />
<path d="M250.0 281.0L250.0 284.6L254.0 286.0L254.0 282.4L250.0 281.0M250.0 287.2L250.0 290.8L254.0 292.2L254.0 288.6L250.0 287.2M250.0 293.4L250.0 297.0L254.0 298.4L254.0 294.8L250.0 293.4M250.0 299.6L250.0 303.2L254.0 304.6L254.0 301.0L250.0 299.6M250.0 305.8L250.0 309.4L254.0 310.8L254.0 307.2L250.0 305.8M250.0 312.0L250.0 315.6L254.0 317.0L254.0 313.4L250.0 312.0M250.0 318.2L250.0 321.8L254.0 323.2L254.0 319.6L250.0 318.2M250.0 324.4L250.0 328.0L254.0 329.4L254.0 325.8L250.0 324.4M250.0 330.6L250.0 334.2L254.0 335.6L254.0 332.0L250.0 330.6M250.0 336.8L250.0 340.4L254.0 341.8L254.0 338.2L250.0 336.8M250.0 343.0L250.0 346.6L254.0 348.0L254.0 344.4L250.0 343.0M250.0 349.2L250.0 352.8L254.0 354.2L254.0 350.6L250.0 349.2" fill="none" stroke="#4a4a4a" stroke-width="0.5" />
<clipPath id="c3"><path d="M282.5 284.3L330.5 249.0L331.0 249.6L331.0 324.3L283.3 360.6L282.5 360.3Z"/></clipPath>
<path d="M282.5 284.3L330.5 249.0L331.0 249.6L331.0 324.3L283.3 360.6L282.5 360.3Z" fill="#e6e6e8"/>
<g clip-path="url(#c3)">
<path d="M286.0 245.0L286.0 365.0M290.3 245.0L290.3 365.0M294.6 245.0L294.6 365.0M298.9 245.0L298.9 365.0M303.2 245.0L303.2 365.0M307.5 245.0L307.5 365.0M311.8 245.0L311.8 365.0M316.1 245.0L316.1 365.0M320.4 245.0L320.4 365.0M324.7 245.0L324.7 365.0M329.0 245.0L329.0 365.0" fill="none" stroke="#2c2c2c" stroke-width="1.3" />
<path d="M282.9 284.3L330.5 249.0M282.9 290.2L330.5 254.9M282.9 296.0L330.5 260.7M282.9 301.9L330.5 266.6M282.9 307.8L330.5 272.5M282.9 313.7L330.5 278.4M282.9 319.5L330.5 284.2M282.9 325.4L330.5 290.1M282.9 331.3L330.5 296.0M282.9 337.1L330.5 301.8M282.9 343.0L330.5 307.7M282.9 348.9L330.5 313.6M282.9 354.7L330.5 319.4M282.9 360.6L330.5 325.3" fill="none" stroke="#e6e6e8" stroke-width="1.9" />
<path d="M282.9 283.4L330.5 248.1M282.9 285.2L330.5 249.9M282.9 289.3L330.5 254.0M282.9 291.1L330.5 255.8M282.9 295.1L330.5 259.8M282.9 296.9L330.5 261.6M282.9 301.0L330.5 265.7M282.9 302.8L330.5 267.5M282.9 306.9L330.5 271.6M282.9 308.7L330.5 273.4M282.9 312.8L330.5 277.5M282.9 314.6L330.5 279.3M282.9 318.6L330.5 283.3M282.9 320.4L330.5 285.1M282.9 324.5L330.5 289.2M282.9 326.3L330.5 291.0M282.9 330.4L330.5 295.1M282.9 332.2L330.5 296.9M282.9 336.2L330.5 300.9M282.9 338.0L330.5 302.7M282.9 342.1L330.5 306.8M282.9 343.9L330.5 308.6M282.9 348.0L330.5 312.7M282.9 349.8L330.5 314.5M282.9 353.8L330.5 318.5M282.9 355.6L330.5 320.3M282.9 359.7L330.5 324.4M282.9 361.5L330.5 326.2" fill="none" stroke="#777" stroke-width="0.45" />
</g>
<path d="M282.5 284.3L330.5 249.0L331.0 249.6L331.0 324.3L283.3 360.6L282.5 360.3Z" fill="none" stroke="#4a4a4a" stroke-width="0.68"/>
<path d="M248.1 277.4L254.6 270.5L276.7 282.3L282.5 284.3L282.5 289.7Z" fill="#f1f1f3" stroke="#4a4a4a" stroke-width="0.68" stroke-linejoin="round" />
<path d="M276.7 282.3L316.9 251.2L330.5 249.0L282.9 284.3Z" fill="#f1f1f3" stroke="#4a4a4a" stroke-width="0.68" stroke-linejoin="round" />
<path d="M254.6 272.8L276.7 285.0L282.5 286.0" fill="none" stroke="#4a4a4a" stroke-width="0.68" />
<path d="M253.8 265.1L293.1 234.8L316.9 246.3L316.9 251.2L276.7 282.3L254.6 270.5Z" fill="#f1f1f3" stroke="#4a4a4a" stroke-width="0.68" stroke-linejoin="round" />
<path d="M276.7 278.2L276.7 282.3" fill="none" stroke="#4a4a4a" stroke-width="0.68" />
<path d="M253.8 265.1L293.1 234.8L316.9 246.3L276.7 278.2Z" fill="#f1f1f3" stroke="#4a4a4a" stroke-width="0.68" stroke-linejoin="round" />
<filter id="pn" x="0" y="0" width="100%" height="100%"><feTurbulence type="fractalNoise" baseFrequency="0.045 0.06" numOctaves="3" seed="7" result="n"/><feColorMatrix type="matrix" values="0 0 0 0 0  0 0 0 0 0  0 0 0 0 0  0.55 0 0 0 -0.2"/></filter>
<rect x="48" y="102" width="748.2" height="410.4" fill="#000" filter="url(#pn)" opacity=".16"/>
</svg>
<div class="abs" style="left:842.9px;top:33px;width:21.3px;height:6px;background:#3c3b3c"></div>
<svg style="left:857.5px;top:34px" width="6" height="4"><path d="M2.2 0L0 2L2.2 4zM5.2 0L3 2L5.2 4z" fill="#d0d0d0"/></svg>
<svg style="left:848px;top:41.5px" width="12" height="2"><path d="M0 1h1.6M3.2 1h1.6M6.4 1h1.6M9.6 1h1.6" stroke="#2f2e2f" stroke-width="1.4"/></svg>
<svg style="left:848px;top:64.5px" width="12" height="2"><path d="M0 1h1.6M3.2 1h1.6M6.4 1h1.6M9.6 1h1.6" stroke="#2f2e2f" stroke-width="1.4"/></svg>
<svg style="left:848px;top:87.7px" width="12" height="2"><path d="M0 1h1.6M3.2 1h1.6M6.4 1h1.6M9.6 1h1.6" stroke="#2f2e2f" stroke-width="1.4"/></svg>
<svg style="left:848px;top:111px" width="12" height="2"><path d="M0 1h1.6M3.2 1h1.6M6.4 1h1.6M9.6 1h1.6" stroke="#2f2e2f" stroke-width="1.4"/></svg>
<svg style="left:848px;top:150px" width="12" height="2"><path d="M0 1h1.6M3.2 1h1.6M6.4 1h1.6M9.6 1h1.6" stroke="#2f2e2f" stroke-width="1.4"/></svg>
<svg style="left:848px;top:173.5px" width="12" height="2"><path d="M0 1h1.6M3.2 1h1.6M6.4 1h1.6M9.6 1h1.6" stroke="#2f2e2f" stroke-width="1.4"/></svg>
<div class="abs" style="left:842.9px;top:61.2px;width:21.3px;height:1px;background:#3a393a"></div>
<div class="abs" style="left:842.9px;top:85.2px;width:21.3px;height:1px;background:#3a393a"></div>
<div class="abs" style="left:842.9px;top:108.0px;width:21.3px;height:1px;background:#3a393a"></div>
<div class="abs" style="left:842.9px;top:147.5px;width:21.3px;height:1px;background:#3a393a"></div>
<div class="abs" style="left:842.9px;top:170.5px;width:21.3px;height:1px;background:#3a393a"></div>
<div class="abs" style="left:842.9px;top:194.2px;width:21.3px;height:1px;background:#3a393a"></div>
<svg style="left:848px;top:47px" width="13" height="12"><rect x="1" y="1" width="3" height="2" fill="#e6e6e6"/><rect x="1" y="4" width="3" height="2" fill="#e6e6e6"/><rect x="1" y="7" width="3" height="3" fill="#e6e6e6"/><path d="M7 2.5q4 0 3.5 4.5q-.3 2-2 3" fill="none" stroke="#e6e6e6" stroke-width="1.4"/><path d="M5.5 2.5l2.5-2v4z" fill="#e6e6e6"/></svg>
<svg style="left:847.5px;top:70px" width="14" height="13"><rect x="1" y="1" width="4.5" height="4" rx="1" fill="none" stroke="#e6e6e6" stroke-width="1.1"/><path d="M5 3q4 0 3.5 4t3 4" fill="none" stroke="#e6e6e6" stroke-width="1.1"/><path d="M2.5 6q0 4 4 4.5l3 1.5" fill="none" stroke="#e6e6e6" stroke-width="1.1"/><rect x="8.5" y="7" width="4" height="4.5" rx="1" fill="none" stroke="#e6e6e6" stroke-width="1.1"/></svg>
<svg style="left:848px;top:94px" width="13" height="11"><path d="M0 3h11M0 8h11" stroke="#e6e6e6" stroke-width="1.3"/><ellipse cx="4.5" cy="3" rx="2.2" ry="1.8" fill="#e6e6e6"/><ellipse cx="9" cy="8" rx="2" ry="2.3" fill="#e6e6e6"/></svg>
<div class="t" style="left:848.5px;top:117.5px;font-size:11px;line-height:11px;height:11px;color:#e6e6e6;transform:none;-webkit-text-stroke:0">A</div><div class="abs" style="left:857.5px;top:118px;width:1px;height:9px;background:#e6e6e6"></div>
<svg style="left:849.5px;top:133px" width="9" height="10"><path d="M3.5 0H8V9H6.6V1.2H5.6V9H4.2V5.2H3.5A2.6 2.6 0 0 1 3.5 0z" fill="#e6e6e6"/></svg>
<svg style="left:849px;top:157px" width="10" height="10"><rect x=".3" y=".3" width="9" height="8.6" rx="1" fill="#e6e6e6"/><path d="M2.2 3h5.4M2.2 5.2h5.4" stroke="#535154" stroke-width="1"/><path d="M5.5 9L9.3 6V9z" fill="#535154"/></svg>
<div class="abs" style="left:847px;top:179px;width:13px;height:13px;border-radius:50%;background:#1b6ff0;box-shadow:0 0 1px #1b6ff0"></div>
<svg style="left:851px;top:182.5px" width="6" height="8"><path d="M1.5 .5h3.5l-.3 1.2h-3.5zM1 2.4h3.6l-1 4.6h-1.5l.6-3h-2z" fill="#cfe3ff"/></svg>
<div class="abs panel" style="left:866px;top:49px;width:202px;height:57.5px"></div>
<div class="abs tabrow" style="left:866px;top:39.2px;width:202px;height:9.6px"></div>
<div class="abs tab" style="left:866px;top:39.2px;width:22px;height:9.6px"></div>
<div class="t" style="transform:scaleX(0.86);left:869.5px;top:40.3px;font-size:6.3px;color:#9c9c9c">Color</div>
<div class="abs tab" style="left:888px;top:39.2px;width:33px;height:9.6px"></div>
<div class="t" style="transform:scaleX(0.86);left:891.5px;top:40.3px;font-size:6.3px;color:#9c9c9c">Swatches</div>
<div class="abs tab on" style="left:921px;top:39.2px;width:42px;height:10.1px"></div>
<div class="t b" style="transform:scaleX(0.86);left:924.5px;top:40.3px;font-size:6.3px;color:#f4f4f4">Adjustments</div>
<svg style="left:1064px;top:43.0px" width="4" height="3"><path d="M0 0h4l-2 2.5z" fill="#bbb"/></svg>
<div class="t b" style="left:870.5px;top:51.7px;font-size:6.8px;transform:scaleX(.86)">Add an adjustment</div>
<svg width="0" height="0" style="left:0;top:0"><defs><linearGradient id="gr1" x1="0" x2="1"><stop offset="0" stop-color="#e8e8e8"/><stop offset="1" stop-color="#555"/></linearGradient></defs></svg>
<svg style="left:891px;top:63.2px" width="10" height="8"><circle cx="5" cy="4" r="2" fill="#dcdcdc"/><path d="M5 -.8v1.6M5 7.2v1.6M.2 4h1.6M8.2 4h1.6M1.6 .6l1.1 1.1M7.3 6.3l1.1 1.1M8.4 .6L7.3 1.7M1.6 7.4l1.1-1.1" stroke="#dcdcdc" stroke-width=".9"/></svg>
<svg style="left:905px;top:63.2px" width="10" height="8"><path d="M0 7.5h10" stroke="#dcdcdc" stroke-width="1"/><path d="M.5 7V5l1-1 1 1.5L3.5 2 4.5 4l1-3 1 3.5 1-1.5 1 2 .5-.5V7z" fill="#dcdcdc"/></svg>
<svg style="left:918.7px;top:63.2px" width="10" height="8"><rect x=".5" y="0" width="9" height="8" fill="#767576" stroke="#dcdcdc" stroke-width=".9"/><path d="M1 7.5Q5 7 9 .8" stroke="#dcdcdc" stroke-width="1.1" fill="none"/><path d="M5 0v8" stroke="#aaa" stroke-width=".5"/></svg>
<svg style="left:932px;top:63.2px" width="10" height="8"><rect x=".5" y="0" width="9" height="8" fill="#767576" stroke="#dcdcdc" stroke-width=".9"/><path d="M1 7L9 1" stroke="#dcdcdc" stroke-width="1"/><path d="M2 2h2M6 6h2M7 5v2" stroke="#dcdcdc" stroke-width=".7"/></svg>
<svg style="left:946px;top:63.2px" width="10" height="8"><path d="M.8 .5h8.4L5 8z" fill="none" stroke="#dcdcdc" stroke-width="1.3"/></svg>
<svg style="left:885px;top:78.7px" width="10" height="8"><rect x=".5" y="0" width="9" height="8" fill="#8a898a" stroke="#dcdcdc" stroke-width=".9"/><rect x="1" y="0.5" width="8" height="3" fill="#dcdcdc"/><path d="M1 5.5h8" stroke="#444" stroke-width=".8"/></svg>
<svg style="left:898px;top:78.7px" width="10" height="8"><path d="M5 0v2M1.5 2.2h7M2 2.2L.8 6M2 2.2L3.2 6M8 2.2L6.8 6M8 2.2L9.2 6" stroke="#dcdcdc" stroke-width=".9" fill="none"/><path d="M.3 6h3.4a1.7 1.7 0 0 1-3.4 0zM6.3 6h3.4a1.7 1.7 0 0 1-3.4 0z" fill="#dcdcdc"/><circle cx="5" cy=".8" r=".9" fill="#dcdcdc"/></svg>
<svg style="left:912px;top:78.7px" width="10" height="8"><rect x=".5" y="0" width="9" height="8" fill="#3c3b3c" stroke="#dcdcdc" stroke-width=".9"/><rect x="5" y=".4" width="4.1" height="7.2" fill="#dcdcdc"/></svg>
<svg style="left:925px;top:78.7px" width="10" height="8"><rect x=".5" y="0" width="6.5" height="5.5" rx="1" fill="none" stroke="#dcdcdc" stroke-width="1"/><circle cx="3.8" cy="2.6" r="1.4" fill="#dcdcdc"/><circle cx="7.3" cy="5.8" r="2.4" fill="#535154" stroke="#dcdcdc" stroke-width="1"/></svg>
<svg style="left:938.6px;top:78.7px" width="10" height="8"><circle cx="5" cy="2.6" r="2.3" fill="#dcdcdc"/><circle cx="3" cy="5.6" r="2.3" fill="#dcdcdc"/><circle cx="7" cy="5.6" r="2.3" fill="#dcdcdc"/><circle cx="5" cy="4.6" r=".9" fill="#535154"/></svg>
<svg style="left:952.8px;top:78.7px" width="10" height="8"><rect x=".5" y="0" width="9" height="8" fill="#8a898a" stroke="#dcdcdc" stroke-width=".9"/><path d="M3.5 0v8M6.5 0v8M.5 2.8h9M.5 5.4h9" stroke="#4a494a" stroke-width=".7"/></svg>
<svg style="left:891.4px;top:94px" width="10" height="8"><rect x=".5" y="0" width="9" height="8" fill="#dcdcdc"/><path d="M2.5 6.5L7 1.5 7.5 3 4 7z" fill="#3c3b3c"/></svg>
<svg style="left:905px;top:94px" width="10" height="8"><rect x=".5" y="0" width="9" height="8" fill="#8a898a" stroke="#dcdcdc" stroke-width=".9"/><path d="M1 7L9 1" stroke="#dcdcdc" stroke-width="1.6"/></svg>
<svg style="left:918.7px;top:94px" width="10" height="8"><rect x=".5" y="0" width="9" height="8" fill="#3c3b3c" stroke="#dcdcdc" stroke-width=".9"/><path d="M1 7V5.5h3V3h3V.8h2V7z" fill="#dcdcdc"/></svg>
<svg style="left:932px;top:94px" width="10" height="8"><rect x=".5" y="0" width="9" height="8" fill="#8a898a" stroke="#dcdcdc" stroke-width=".9"/><path d="M1 .5L5 4 1 7.5zM9 .5L5 4 9 7.5z" fill="#3c3b3c"/></svg>
<svg style="left:945.8px;top:94px" width="10" height="8"><rect x=".5" y="0" width="9" height="8" fill="url(#gr1)" stroke="#dcdcdc" stroke-width=".9"/></svg>
<div class="abs panel" style="left:866px;top:118px;width:202px;height:225px"></div>
<div class="abs tabrow" style="left:866px;top:109px;width:202px;height:9.2px"></div>
<div class="abs tab on" style="left:866px;top:109px;width:33.60000000000002px;height:9.7px"></div>
<div class="t b" style="transform:scaleX(0.86);left:869.5px;top:109.89999999999999px;font-size:6.3px;color:#f4f4f4">Properties</div>
<div class="abs tab" style="left:899.6px;top:109px;width:21.399999999999977px;height:9.2px"></div>
<div class="t" style="transform:scaleX(0.86);left:904.4px;top:109.89999999999999px;font-size:6.3px;color:#9c9c9c">Brush</div>
<div class="abs tab" style="left:921px;top:109px;width:66px;height:9.2px"></div>
<div class="t" style="transform:scaleX(0.92);left:927.5px;top:109.89999999999999px;font-size:6.3px;color:#9c9c9c">Adobe Color Themes</div>
<svg style="left:1064px;top:112.6px" width="4" height="3"><path d="M0 0h4l-2 2.5z" fill="#bbb"/></svg>
<div class="t b" style="left:870.6px;top:124.5px;font-size:6.8px;transform:scaleX(.86)">No Properties</div>
<div class="abs" style="left:866px;top:136.5px;width:202px;height:1px;background:#5e5d5e"></div>
<div class="abs panel" style="left:866px;top:354.5px;width:202px;height:225.5px"></div>
<div class="abs tabrow" style="left:866px;top:345.7px;width:202px;height:9px"></div>
<div class="abs tab on" style="left:866px;top:345.7px;width:23.200000000000045px;height:9.5px"></div>
<div class="t b" style="left:869.5px;top:346.5px;font-size:6.3px;color:#f4f4f4">Layers</div>
<div class="abs tab" style="left:889.2px;top:345.7px;width:22.399999999999977px;height:9px"></div>
<div class="t" style="left:893.7px;top:346.5px;font-size:6.3px;color:#9c9c9c">Paths</div>
<div class="abs tab" style="left:911.6px;top:345.7px;width:34.10000000000002px;height:9px"></div>
<div class="t" style="left:916.6px;top:346.5px;font-size:6.3px;color:#9c9c9c">Channels</div>
<svg style="left:1064px;top:349.2px" width="4" height="3"><path d="M0 0h4l-2 2.5z" fill="#bbb"/></svg>
<div class="abs" style="left:868.8px;top:358px;width:49px;height:9.5px;background:linear-gradient(#6b6a6b,#5c5b5c);border:1px solid #3a393a;border-radius:2px"></div>
<svg style="left:872px;top:359.5px" width="7" height="7"><circle cx="4" cy="2.6" r="2" fill="none" stroke="#eee" stroke-width="1"/><path d="M2.6 4L.5 6.3" stroke="#eee" stroke-width="1.1"/></svg>
<div class="t" style="left:880px;top:358.8px;font-size:6.8px;color:#f0f0f0">Kind</div>
<svg style="left:912.5px;top:359.5px" width="4" height="7"><path d="M0 2.5L1.5 0L3 2.5ZM0 4L1.5 6.5L3 4Z" fill="#ddd"/></svg>
<svg style="left:924px;top:359.1px" width="9" height="7"><rect x=".5" y=".5" width="8" height="6" fill="#6a696a" stroke="#dcdcdc" stroke-width="1"/><path d="M1.5 5.5l2-2.5 1.5 1.5 1-1 1.5 2z" fill="#dcdcdc"/></svg>
<svg style="left:938px;top:358.6px" width="8" height="8"><circle cx="4" cy="4" r="3.3" fill="none" stroke="#dcdcdc" stroke-width="1"/><path d="M4 .7A3.3 3.3 0 0 0 4 7.3z" fill="#dcdcdc"/></svg>
<div class="t b" style="left:951px;top:357.6px;font-size:9.5px;line-height:10px;height:10px;font-family:'Liberation Serif',serif;color:#dcdcdc;transform:none;-webkit-text-stroke:0">T</div>
<svg style="left:964.5px;top:358.6px" width="9" height="8"><path d="M2 1.2v5.6M7 1.2v5.6M2 1.2h5M2 6.8h5" stroke="#dcdcdc" stroke-width=".9" fill="none"/><rect x=".5" y="0" width="2.4" height="2.2" fill="#dcdcdc"/><rect x="6" y="0" width="2.4" height="2.2" fill="#dcdcdc"/><rect x=".5" y="5.8" width="2.4" height="2.2" fill="#dcdcdc"/><rect x="6" y="5.8" width="2.4" height="2.2" fill="#dcdcdc"/></svg>
<svg style="left:978.5px;top:358.6px" width="9" height="8"><path d="M2 .5h4l2 2v5h-6z" fill="none" stroke="#dcdcdc" stroke-width="1"/><rect x="0" y="4" width="4.5" height="4" fill="#dcdcdc"/></svg>
<div class="abs" style="left:994.5px;top:357.1px;width:4.5px;height:10px;background:#2c2b2c;border-radius:1px"></div><div class="abs" style="left:995px;top:357.6px;width:3.5px;height:3.5px;background:#6e6d6e;border-radius:1px"></div>
<div class="abs" style="left:866px;top:369.7px;width:202px;height:1px;background:#454445"></div>
<div class="abs" style="left:868.8px;top:374.2px;width:71px;height:9.5px;background:linear-gradient(#5a595a,#545354);border:1px solid #3f3e3f;border-radius:2px"></div>
<div class="t" style="left:872px;top:375px;font-size:6.3px;color:#8e8e8e">Normal</div>
<svg style="left:934.5px;top:375.7px" width="4" height="7"><path d="M0 2.5L1.5 0L3 2.5ZM0 4L1.5 6.5L3 4Z" fill="#888"/></svg>
<div class="t" style="left:945px;top:375px;font-size:6.6px;color:#d0d0d0">Opacity:</div>
<div class="abs" style="left:969px;top:374.2px;width:18.5px;height:9.5px;background:#484748;border:1px solid #3f3e3f"></div>
<div class="t" style="left:972px;top:375px;font-size:6.2px;color:#777">100%</div>
<div class="abs" style="left:987.5px;top:374.2px;width:10.5px;height:9.5px;background:linear-gradient(#6c6b6d,#5c5b5d);border:1px solid #3f3e3f;border-radius:0 2px 2px 0"></div>
<svg style="left:991px;top:377.7px" width="4" height="3"><path d="M0 0h4l-2 2.4z" fill="#ddd"/></svg>
<div class="abs" style="left:866px;top:385.7px;width:202px;height:1px;background:#454445"></div>
<div class="t" style="left:869px;top:390.5px;font-size:6.4px;color:#9a9a9a">Lock:</div>
<svg style="left:886.5px;top:391.0px" width="8" height="7"><rect x=".5" y=".5" width="6.5" height="6" fill="#767576" stroke="#aaa" stroke-width=".8"/><path d="M.5 3.5h6.5M3.7 .5v6" stroke="#ccc" stroke-width=".7"/></svg>
<svg style="left:899.5px;top:390.5px" width="9" height="8"><path d="M8.5 .3L3.5 5" stroke="#bbb" stroke-width="1.2"/><path d="M3.8 4.6Q1.5 5 .5 7.6q2.6-.2 3.8-2.2z" fill="#bbb"/></svg>
<svg style="left:911px;top:390.0px" width="9" height="9"><path d="M4.5 .5v8M.5 4.5h8" stroke="#aaa" stroke-width=".8"/><path d="M4.5 0L5.8 1.7H3.2zM4.5 9L5.8 7.3H3.2zM0 4.5L1.7 3.2v2.6zM9 4.5L7.3 3.2v2.6z" fill="#aaa"/></svg>
<svg style="left:924px;top:390.0px" width="8" height="9"><path d="M2 4V2.6a2 2 0 0 1 4 0V4" fill="none" stroke="#aaa" stroke-width="1"/><rect x="1" y="4" width="6" height="4.3" fill="#aaa"/><rect x="3.4" y="5.3" width="1.2" height="1.6" fill="#535154"/></svg>
<div class="t" style="left:957.4px;top:390.5px;font-size:6.4px;color:#c8c8c8">Fill:</div>
<div class="abs" style="left:969px;top:389.7px;width:18.5px;height:9.5px;background:#484748;border:1px solid #3f3e3f"></div>
<div class="t" style="left:972px;top:390.5px;font-size:6.2px;color:#777">100%</div>
<div class="abs" style="left:987.5px;top:389.7px;width:10.5px;height:9.5px;background:linear-gradient(#686769,#5a595b);border:1px solid #3f3e3f;border-radius:0 2px 2px 0"></div>
<svg style="left:991px;top:393.2px" width="4" height="3"><path d="M0 0h4l-2 2.4z" fill="#ccc"/></svg>
<div class="abs" style="left:866px;top:402.5px;width:202px;height:132.9px;background:#535154"></div>
<div class="abs" style="left:866px;top:535.4px;width:202px;height:34.6px;background:#4a494b"></div>
<div class="abs" style="left:881.8px;top:402.5px;width:1px;height:132.9px;background:#454445"></div>
<div class="abs" style="left:866px;top:402.4px;width:202px;height:1px;background:#434243"></div>
<svg style="left:869.6px;top:407.96px" width="9" height="6"><path d="M.3 2.7Q4.2-.9 8.2 2.7Q4.2 6.2.3 2.7z" fill="#d6d6d6"/><circle cx="4.2" cy="2.7" r="1.35" fill="#4a494a"/><circle cx="4.2" cy="2.7" r=".5" fill="#d6d6d6"/></svg>
<div class="abs" style="left:884.1px;top:404.86px;width:19.200000000000003px;height:11.4px;background:#3b3a3c;border-radius:1px"></div>
<div class="abs" style="left:884.9px;top:405.66px;width:17.6px;height:9.8px;background:#ececec;border:.6px solid #fafafa"></div>
<div class="t b" style="left:908.3px;top:407.16px;font-size:6px;color:#e6e6e6;transform:scaleX(.9)">Layer 3</div>
<div class="abs" style="left:866px;top:417.12px;width:202px;height:1px;background:#434243"></div>
<svg style="left:869.6px;top:422.68px" width="9" height="6"><path d="M.3 2.7Q4.2-.9 8.2 2.7Q4.2 6.2.3 2.7z" fill="#d6d6d6"/><circle cx="4.2" cy="2.7" r="1.35" fill="#4a494a"/><circle cx="4.2" cy="2.7" r=".5" fill="#d6d6d6"/></svg>
<div class="abs" style="left:884.1px;top:419.58000000000004px;width:19.200000000000003px;height:11.4px;background:#3b3a3c;border-radius:1px"></div>
<svg style="left:884.9px;top:420.38000000000005px" width="17.6" height="9.8"><rect width="17.6" height="9.8" fill="#fbfbfb"/><path d="M7 0v9.8M10.5 0v9.8M0 5h17.6" stroke="#dcdce4" stroke-width="1.2"/><rect x="7" y="2" width="3.5" height="6" fill="#e4e6f0"/></svg>
<svg style="left:904.3px;top:421.28000000000003px" width="4" height="8"><rect x=".6" y=".4" width="2.6" height="3" rx="1.1" fill="none" stroke="#c8c8c8" stroke-width=".85"/><rect x=".6" y="4.4" width="2.6" height="3" rx="1.1" fill="none" stroke="#c8c8c8" stroke-width=".85"/><path d="M1.9 2.6v2.6" stroke="#c8c8c8" stroke-width=".8"/></svg>
<div class="abs" style="left:910.4000000000001px;top:419.58000000000004px;width:19.200000000000003px;height:11.4px;background:#3b3a3c;border-radius:1px"></div>
<svg style="left:911.2px;top:420.38000000000005px" width="17.6" height="9.8"><rect width="17.6" height="9.8" fill="#f6f6f6"/><path d="M4.3 7.4L7.1 2.6 8.5 4.3 14.2 2.3 13.1 4.4 8.5 6.9 7.1 5.7 5.7 8z" fill="#0c0c0c" stroke="#0c0c0c" stroke-width=".6" stroke-linejoin="round"/></svg>
<div class="t b" style="left:935px;top:421.88000000000005px;font-size:6px;color:#e6e6e6;transform:scaleX(.9)">Layer 2</div>
<div class="abs" style="left:866px;top:431.84px;width:202px;height:1px;background:#434243"></div>
<div class="abs" style="left:870px;top:436.4px;width:7.2px;height:7.2px;border:1px solid #454446;border-bottom-color:#4f4e50;border-right-color:#4f4e50;background:#4b4a4c"></div>
<div class="abs" style="left:884.1px;top:434.3px;width:19.200000000000003px;height:11.4px;background:#3b3a3c;border-radius:1px"></div>
<svg style="left:884.9px;top:435.1px" width="17.6" height="9.8"><rect width="17.6" height="9.8" fill="#f4f4f4"/><path d="M1 2h3M6 1v3M2 6l2 2M7 5h4M12 2l2 2M9 7l3 1M14 6v3M4 4l3 1M11 0v2M15 1l2 2M0 8h2" stroke="#bcbcbc" stroke-width="1"/></svg>
<svg style="left:904.3px;top:436.0px" width="4" height="8"><rect x=".6" y=".4" width="2.6" height="3" rx="1.1" fill="none" stroke="#c8c8c8" stroke-width=".85"/><rect x=".6" y="4.4" width="2.6" height="3" rx="1.1" fill="none" stroke="#c8c8c8" stroke-width=".85"/><path d="M1.9 2.6v2.6" stroke="#c8c8c8" stroke-width=".8"/></svg>
<div class="abs" style="left:910.4000000000001px;top:434.3px;width:19.200000000000003px;height:11.4px;background:#3b3a3c;border-radius:1px"></div>
<svg style="left:911.2px;top:435.1px" width="17.6" height="9.8"><rect width="17.6" height="9.8" fill="#f6f6f6"/><path d="M4.3 7.4L7.1 2.6 8.5 4.3 14.2 2.3 13.1 4.4 8.5 6.9 7.1 5.7 5.7 8z" fill="#0c0c0c" stroke="#0c0c0c" stroke-width=".6" stroke-linejoin="round"/></svg>
<div class="t b" style="left:935px;top:436.6px;font-size:6px;color:#e6e6e6;transform:scaleX(.9)">Layer 1</div>
<div class="abs" style="left:866px;top:446.56px;width:202px;height:1px;background:#434243"></div>
<svg style="left:869.6px;top:452.12px" width="9" height="6"><path d="M.3 2.7Q4.2-.9 8.2 2.7Q4.2 6.2.3 2.7z" fill="#d6d6d6"/><circle cx="4.2" cy="2.7" r="1.35" fill="#4a494a"/><circle cx="4.2" cy="2.7" r=".5" fill="#d6d6d6"/></svg>
<div class="abs" style="left:884.1px;top:449.02000000000004px;width:19.200000000000003px;height:11.4px;background:#3b3a3c;border-radius:1px"></div>
<svg style="left:884.9px;top:449.82000000000005px" width="17.6" height="9.8"><rect width="17.6" height="9.8" fill="#f3f3f3"/><path d="M3 6l2-2 2 .5 1-1.5M4.5 6.5l3 .5M9 4l3-1.5 1.5 .5M6 3l1 3" stroke="#a8a8a8" stroke-width=".8" fill="none"/></svg>
<div class="t b" style="left:908.3px;top:451.32000000000005px;font-size:6px;color:#e6e6e6;transform:scaleX(.9)">2.png</div>
<div class="abs" style="left:866px;top:461.28px;width:202px;height:1px;background:#434243"></div>
<div class="abs" style="left:870px;top:465.84px;width:7.2px;height:7.2px;border:1px solid #454446;border-bottom-color:#4f4e50;border-right-color:#4f4e50;background:#4b4a4c"></div>
<div class="abs" style="left:884.1px;top:463.74px;width:19.200000000000003px;height:11.4px;background:#3b3a3c;border-radius:1px"></div>
<svg style="left:884.9px;top:464.54px" width="17.6" height="9.8"><rect width="17.6" height="9.8" fill="#f3f3f3"/><path d="M6 6.5L7 3.5 8.5 3 9 6z" fill="#666"/><path d="M10.5 4l3-1.5" stroke="#aaa" stroke-width=".8"/></svg>
<svg style="left:904.3px;top:465.44px" width="4" height="8"><rect x=".6" y=".4" width="2.6" height="3" rx="1.1" fill="none" stroke="#c8c8c8" stroke-width=".85"/><rect x=".6" y="4.4" width="2.6" height="3" rx="1.1" fill="none" stroke="#c8c8c8" stroke-width=".85"/><path d="M1.9 2.6v2.6" stroke="#c8c8c8" stroke-width=".8"/></svg>
<div class="abs" style="left:910.4000000000001px;top:463.74px;width:19.200000000000003px;height:11.4px;background:#3b3a3c;border-radius:1px"></div>
<div class="abs" style="left:911.2px;top:464.54px;width:17.6px;height:9.8px;background:#fafafa"></div>
<div class="t b" style="left:935px;top:466.04px;font-size:6px;color:#e6e6e6;transform:scaleX(.9)">3.png</div>
<div class="abs" style="left:866px;top:476.0px;width:202px;height:1px;background:#434243"></div>
<svg style="left:869.6px;top:481.56px" width="9" height="6"><path d="M.3 2.7Q4.2-.9 8.2 2.7Q4.2 6.2.3 2.7z" fill="#d6d6d6"/><circle cx="4.2" cy="2.7" r="1.35" fill="#4a494a"/><circle cx="4.2" cy="2.7" r=".5" fill="#d6d6d6"/></svg>
<svg style="left:887.5px;top:481.16px" width="4" height="6"><path d="M2.6 .3v3.2" stroke="#ccc" stroke-width=".8"/><path d="M1 3l1.6 2.2L4 3z" fill="#ccc"/></svg>
<svg style="left:898.4px;top:480.66px" width="7" height="7"><circle cx="3.5" cy="3.5" r="3" fill="none" stroke="#d8d8d8" stroke-width=".9"/><path d="M3.5 .5A3 3 0 0 1 3.5 6.5z" fill="#d8d8d8"/></svg>
<svg style="left:913.9px;top:480.16px" width="4" height="8"><rect x=".6" y=".4" width="2.6" height="3" rx="1.1" fill="none" stroke="#c8c8c8" stroke-width=".85"/><rect x=".6" y="4.4" width="2.6" height="3" rx="1.1" fill="none" stroke="#c8c8c8" stroke-width=".85"/><path d="M1.9 2.6v2.6" stroke="#c8c8c8" stroke-width=".8"/></svg>
<div class="abs" style="left:920.0px;top:478.46000000000004px;width:19.200000000000003px;height:11.4px;background:#3b3a3c;border-radius:1px"></div>
<div class="abs" style="left:920.8px;top:479.26000000000005px;width:17.6px;height:9.8px;background:#fafafa"></div>
<div class="t b" style="left:943.7px;top:480.76000000000005px;font-size:6px;color:#e6e6e6;transform:scaleX(.9)">Black &amp; White 1</div>
<div class="abs" style="left:866px;top:490.71999999999997px;width:202px;height:1px;background:#434243"></div>
<div class="abs" style="left:870px;top:495.28px;width:7.2px;height:7.2px;border:1px solid #454446;border-bottom-color:#4f4e50;border-right-color:#4f4e50;background:#4b4a4c"></div>
<svg style="left:887.5px;top:495.88px" width="4" height="6"><path d="M2.6 .3v3.2" stroke="#ccc" stroke-width=".8"/><path d="M1 3l1.6 2.2L4 3z" fill="#ccc"/></svg>
<svg style="left:898.4px;top:495.38px" width="7" height="7"><circle cx="3.5" cy="3.5" r="3" fill="none" stroke="#d8d8d8" stroke-width=".9"/><path d="M3.5 .5A3 3 0 0 1 3.5 6.5z" fill="#d8d8d8"/></svg>
<svg style="left:913.9px;top:494.88px" width="4" height="8"><rect x=".6" y=".4" width="2.6" height="3" rx="1.1" fill="none" stroke="#c8c8c8" stroke-width=".85"/><rect x=".6" y="4.4" width="2.6" height="3" rx="1.1" fill="none" stroke="#c8c8c8" stroke-width=".85"/><path d="M1.9 2.6v2.6" stroke="#c8c8c8" stroke-width=".8"/></svg>
<div class="abs" style="left:920.0px;top:493.18px;width:19.200000000000003px;height:11.4px;background:#3b3a3c;border-radius:1px"></div>
<div class="abs" style="left:920.8px;top:493.98px;width:17.6px;height:9.8px;background:#fafafa"></div>
<div class="t b" style="left:943.7px;top:495.48px;font-size:6px;color:#e6e6e6;transform:scaleX(.9)">Brightness/Contrast 1</div>
<div class="abs" style="left:866px;top:505.44px;width:202px;height:1px;background:#434243"></div>
<svg style="left:869.6px;top:510.9999999999999px" width="9" height="6"><path d="M.3 2.7Q4.2-.9 8.2 2.7Q4.2 6.2.3 2.7z" fill="#d6d6d6"/><circle cx="4.2" cy="2.7" r="1.35" fill="#4a494a"/><circle cx="4.2" cy="2.7" r=".5" fill="#d6d6d6"/></svg>
<div class="abs" style="left:884.1px;top:507.8999999999999px;width:19.200000000000003px;height:11.4px;background:#3b3a3c;border-radius:1px"></div>
<svg style="left:884.9px;top:508.69999999999993px" width="17.6" height="9.8"><rect width="17.6" height="9.8" fill="#4a4440"/><path d="M1 7l3-3 2 1 3-3 3 2 4-3" stroke="#b8b0a8" stroke-width="1.5" fill="none"/><path d="M2 9l4-2 4 1 5-3" stroke="#8c8278" stroke-width="1.2" fill="none"/><path d="M9 2l2 2-1 2" stroke="#e0dcd8" stroke-width="1"/></svg>
<svg style="left:904.3px;top:509.5999999999999px" width="4" height="8"><rect x=".6" y=".4" width="2.6" height="3" rx="1.1" fill="none" stroke="#c8c8c8" stroke-width=".85"/><rect x=".6" y="4.4" width="2.6" height="3" rx="1.1" fill="none" stroke="#c8c8c8" stroke-width=".85"/><path d="M1.9 2.6v2.6" stroke="#c8c8c8" stroke-width=".8"/></svg>
<div class="abs" style="left:910.4000000000001px;top:507.8999999999999px;width:19.200000000000003px;height:11.4px;background:#3b3a3c;border-radius:1px"></div>
<svg style="left:911.2px;top:508.69999999999993px" width="17.6" height="9.8"><rect width="17.6" height="9.8" fill="#f6f6f6"/><path d="M4.3 7.4L7.1 2.6 8.5 4.3 14.2 2.3 13.1 4.4 8.5 6.9 7.1 5.7 5.7 8z" fill="#0c0c0c" stroke="#0c0c0c" stroke-width=".6" stroke-linejoin="round"/></svg>
<div class="t b" style="left:935px;top:510.19999999999993px;font-size:6px;color:#e6e6e6;transform:scaleX(.9)">4.png</div>
<div class="abs" style="left:866px;top:520.16px;width:202px;height:1px;background:#434243"></div>
<svg style="left:869.6px;top:525.7199999999999px" width="9" height="6"><path d="M.3 2.7Q4.2-.9 8.2 2.7Q4.2 6.2.3 2.7z" fill="#d6d6d6"/><circle cx="4.2" cy="2.7" r="1.35" fill="#4a494a"/><circle cx="4.2" cy="2.7" r=".5" fill="#d6d6d6"/></svg>
<div class="abs" style="left:884.1px;top:522.62px;width:19.200000000000003px;height:11.4px;background:#3b3a3c;border-radius:1px"></div>
<svg style="left:884.9px;top:523.42px" width="17.6" height="9.8"><rect width="17.6" height="9.8" fill="#f5f5f5"/><path d="M5 6.5l2-2 1.5.5 2-2M8 6l2.5-.5" stroke="#c4c4c4" stroke-width=".7" fill="none"/></svg>
<div class="t b" style="left:908.3px;top:524.92px;font-size:6px;color:#e6e6e6;transform:scaleX(.9)">1.png</div>
<div class="abs" style="left:866px;top:534.88px;width:202px;height:1px;background:#434243"></div>
<svg style="left:923.5px;top:468.5px" width="8" height="9"><path d="M1.5 3.5L2.5 3 4 5V.8Q4.6 .2 5.2 .8V3.5L7.2 4.2Q7.8 6 6.8 8.5H3.2Q2.8 6.5 1.5 3.5z" fill="#d8d8d8" stroke="#555" stroke-width=".5"/></svg>
<div class="abs" style="left:866px;top:570px;width:202px;height:10px;background:#4e4d4e;border-top:1px solid #3f3e3f"></div>
<svg style="left:960.5px;top:572.5px" width="9" height="5"><rect x=".5" y=".8" width="4" height="3.2" rx="1.5" fill="none" stroke="#8c8c8c" stroke-width=".9"/><rect x="4" y=".8" width="4" height="3.2" rx="1.5" fill="none" stroke="#8c8c8c" stroke-width=".9"/></svg>
<div class="t" style="left:977.5px;top:570.5px;font-size:7px;font-style:italic;font-family:'Liberation Serif',serif;color:#8c8c8c;transform:none">fx</div>
<svg style="left:992px;top:571.8px" width="8" height="7"><rect x=".5" y=".5" width="7" height="5.6" fill="none" stroke="#8c8c8c" stroke-width="1"/><circle cx="4" cy="3.3" r="1.6" fill="#8c8c8c"/></svg>
<svg style="left:1007.8px;top:571.3px" width="9" height="8"><circle cx="3.6" cy="3.8" r="3" fill="none" stroke="#bbb" stroke-width=".9"/><path d="M3.6 .8A3 3 0 0 1 3.6 6.8z" fill="#bbb"/><path d="M7.5 6.5h1.2" stroke="#bbb" stroke-width="1"/></svg>
<svg style="left:1022px;top:572px" width="8" height="6"><path d="M.5 1h2.5l.8 1H7.5V5.6H.5z" fill="#8c8c8c"/></svg>
<svg style="left:1039px;top:571.5px" width="7" height="7"><path d="M.5 .5H6.5V6.5H.5z" fill="none" stroke="#8c8c8c" stroke-width="1"/><path d="M.5 4.5l2 2" stroke="#8c8c8c" stroke-width=".8"/></svg>
<svg style="left:1053.5px;top:571.3px" width="6" height="7"><path d="M.3 1.2h5.4M2 .4h2" stroke="#8c8c8c" stroke-width=".8"/><path d="M.9 2h4.2l-.4 4.8H1.3z" fill="#8c8c8c"/></svg>
<!-- watermark -->
<div class="abs" style="left:941.2px;top:538.6px;font-weight:bold;font-size:34.2px;line-height:38px;height:38px;color:#fff;white-space:nowrap;transform:scaleX(.832);transform-origin:0 0;will-change:transform;-webkit-text-stroke:.15px #fff">better.</div>
<svg style="left:942px;top:526px" width="50" height="20" fill="none" stroke="#fff" stroke-width="2.05" stroke-linecap="round" stroke-linejoin="round">
<path d="M6 6.4Q2.4 7.4 1.4 9.6Q1.6 11 3.6 11.6Q5.6 12.4 4.4 13.8Q3.2 15.2 1.8 15.2"/>
<path d="M9.3 2.6Q9.8 10 11.3 17.2M10.8 13.6Q11.6 9 13.4 8.4Q14.8 8.6 14.6 11Q14.4 13.4 15.2 14" stroke-width="1.9"/>
<path d="M18.4 7.8Q16 8.4 16 11.2Q16.2 14.2 18.2 14.2Q20.6 13.6 20.6 10.6Q20.4 8 18.4 7.8" stroke-width="1.85"/>
<path d="M21.6 8Q21.4 12.6 22.4 14Q23.8 12.6 24.6 9.8Q24.4 12.8 25.4 14Q27.4 12 28.2 7.4" stroke-width="1.75"/>
<path d="M34.7 7.6Q34.8 11.6 35.8 14.2" stroke-width="1.9"/>
<path d="M40.3 1Q39.2 8 39.1 14.6Q39.6 15.6 40.6 14.4" stroke-width="2.05"/><path d="M32.8 4.5Q39 3.8 46.4 3.8" stroke-width="1.1"/>
</svg>
<!-- small watermark (partly cut) -->
<div class="abs" style="left:1024.3px;top:570.6px;font-weight:bold;font-size:11.5px;line-height:13px;height:13px;color:#f4f4f4;white-space:nowrap;transform:scaleX(.78);transform-origin:0 0;will-change:transform">better</div>
<svg style="left:1026px;top:567.5px" width="16" height="6" fill="none" stroke="#e8e8e8" stroke-width=".7" stroke-linecap="round"><path d="M1.5 2.2Q.6 2.6 1 3.4T.6 4.8M4.2 .8L3 5.4M3.4 4Q4.2 2.8 4.8 3T4.8 4.6M6.4 2.8Q5.6 3.6 6.2 4.6Q7 4.2 6.4 2.8M7.6 2.8L7.8 4.6L8.6 3.2L8.9 4.6L9.8 2.6M11.6 2.8L11.3 4.6M13.8 .6L12.8 5M11 2L15 1.2"/></svg>
</div></body></html>
